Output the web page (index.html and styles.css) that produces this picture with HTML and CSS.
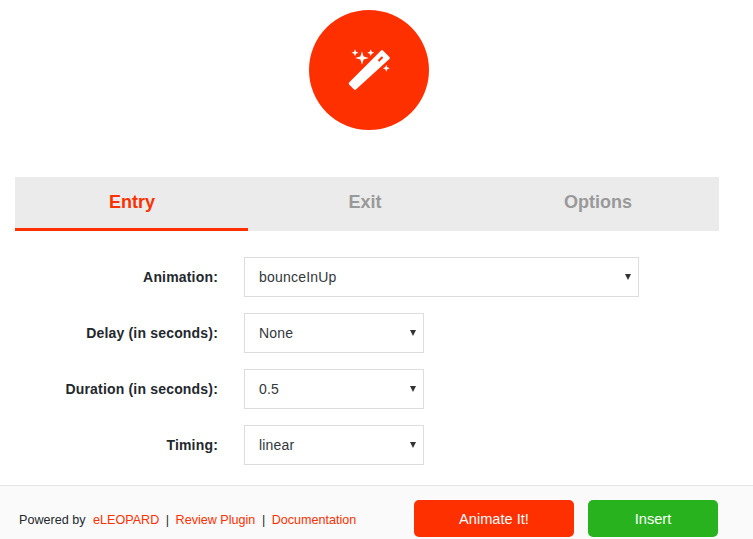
FILE: index.html
```html
<!DOCTYPE html>
<html lang="en">
<head>
    <meta charset="UTF-8">
    <meta name="viewport" content="width=device-width, initial-scale=1.0">
    <title>Animate It!</title>
    <link rel="stylesheet" href="styles.css">
</head>
<body>
    <div class="logo">
        <svg width="50" height="50" viewBox="344 45 50 50" fill="#fff">
            <!-- wand -->
            <path d="M382 51.5 L388.5 58 L355 88.5 L350 83.5 Z" stroke="#fff" stroke-width="2.6" stroke-linejoin="round"/>
            <path d="M378.5 61 L382.5 57" stroke="#ff3000" stroke-width="2.2" fill="none"/>
            <!-- sparkles -->
            <path d="M362 51.2 L363.6 56.4 L368.8 58 L363.6 59.6 L362 64.8 L360.4 59.6 L355.2 58 L360.4 56.4 Z"/>
            <path d="M355 49.2 L356 51.7 L358.5 52.7 L356 53.7 L355 56.2 L354 53.7 L351.5 52.7 L354 51.7 Z"/>
            <path d="M370.7 49.2 L371.7 51.7 L374.2 52.7 L371.7 53.7 L370.7 56.2 L369.7 53.7 L367.2 52.7 L369.7 51.7 Z"/>
            <path d="M386.3 64.8 L387.3 67.3 L389.8 68.3 L387.3 69.3 L386.3 71.8 L385.3 69.3 L382.8 68.3 L385.3 67.3 Z"/>
        </svg>
    </div>

    <div class="tabs">
        <a class="tab active">Entry</a>
        <a class="tab">Exit</a>
        <a class="tab">Options</a>
    </div>

    <div class="form">
        <div class="row">
            <label for="animation">Animation:</label>
            <div class="select-wrap wide">
                <select id="animation"><option>bounceInUp</option></select>
            </div>
        </div>
        <div class="row">
            <label for="delay">Delay (in seconds):</label>
            <div class="select-wrap">
                <select id="delay"><option>None</option></select>
            </div>
        </div>
        <div class="row">
            <label for="duration">Duration (in seconds):</label>
            <div class="select-wrap">
                <select id="duration"><option>0.5</option></select>
            </div>
        </div>
        <div class="row">
            <label for="timing">Timing:</label>
            <div class="select-wrap">
                <select id="timing"><option>linear</option></select>
            </div>
        </div>
    </div>

    <div class="footer">
        <p class="credits">
            <span class="powered">Powered by</span>
            <a>eLEOPARD</a><span class="sep">|</span><a>Review Plugin</a><span class="sep">|</span><a>Documentation</a>
        </p>
        <div class="actions">
            <button class="btn btn-animate">Animate It!</button>
            <button class="btn btn-insert">Insert</button>
        </div>
    </div>
</body>
</html>
```

FILE: styles.css
```css
* {
    box-sizing: border-box;
}
html, body {
    height: 100%;
}
body {
    margin: 0;
    display: flex;
    flex-direction: column;
    height: 100vh;
    overflow: hidden;
    background-color: #fff;
    font-family: "Liberation Sans", Arial, sans-serif;
    color: #23282d;
}
.logo {
    display: flex;
    justify-content: center;
    align-items: center;
    width: 120px;
    height: 120px;
    margin: 10px 0 47px 309px;
    border-radius: 50%;
    background-color: #ff3000;
}
.tabs {
    display: flex;
    width: 704px;
    height: 54px;
    margin-left: 15px;
    background-color: #ebebeb;
}
.tab {
    width: 233px;
    padding: 15px 0 0 1px;
    font-size: 18px;
    font-weight: bold;
    line-height: 20px;
    text-align: center;
    color: #999;
}
.tab.active {
    color: #ff3000;
    border-bottom: 3px solid #ff3000;
}
.form {
    display: flex;
    flex-direction: column;
    gap: 16px;
    margin-top: 26px;
}
.row {
    display: flex;
    align-items: center;
    gap: 26px;
}
.row label {
    width: 218px;
    font-size: 14px;
    font-weight: bold;
    letter-spacing: 0.18px;
    text-align: right;
}
.select-wrap {
    position: relative;
    width: 180px;
}
.select-wrap.wide {
    width: 395px;
}
.select-wrap::after {
    content: '';
    position: absolute;
    top: 17px;
    right: 8px;
    border-top: 6px solid #333;
    border-left: 3px solid transparent;
    border-right: 3px solid transparent;
}
select {
    display: block;
    width: 100%;
    height: 40px;
    padding: 0 14px;
    appearance: none;
    border: 1px solid #ddd;
    border-radius: 0;
    background-color: #fff;
    font-family: inherit;
    font-size: 14px;
    letter-spacing: 0.2px;
    color: #32373c;
}
.footer {
    display: flex;
    justify-content: space-between;
    align-items: flex-start;
    height: 54px;
    margin-top: auto;
    padding: 14px 35px 0 19px;
    border-top: 1px solid #e5e5e5;
    background-color: #fafafa;
}
.credits {
    margin: 0;
    padding-top: 10px;
    font-size: 12.6px;
    line-height: 20px;
}
.credits a {
    color: #ff3000;
}
.powered {
    margin-right: 4px;
}
.sep {
    margin: 0 6.5px;
}
.actions {
    display: flex;
    gap: 14px;
}
.btn {
    height: 37px;
    border: 0;
    border-radius: 5px;
    font-family: inherit;
    font-size: 14.6px;
    color: #fff;
    cursor: pointer;
}
.btn-animate {
    width: 160px;
    background-color: #ff3000;
}
.btn-insert {
    width: 130px;
    background-color: #28b31e;
}
```
